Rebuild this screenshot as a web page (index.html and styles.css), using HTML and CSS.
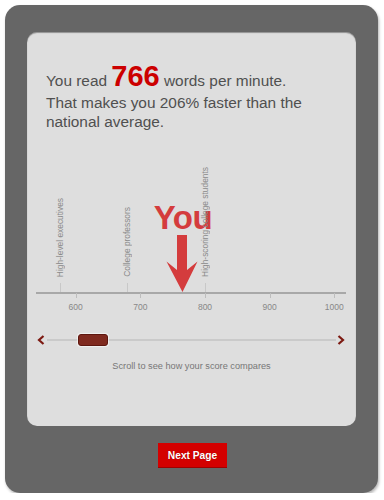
FILE: index.html
```html
<!DOCTYPE html>
<html>
<head>
<meta charset="utf-8">
<link rel="stylesheet" href="styles.css">
</head>
<body>
<div class="frame">
  <div class="card">
    <div class="result">
      <div class="line-one">You read <span class="wpm">766</span> words per minute.</div>
      <p class="compare">That makes you 206% faster than the national average.</p>
    </div>
    <div class="chart">
      <div class="marker" style="left:33px"></div>
      <div class="marker-label" style="left:28px">High-level executives</div>
      <div class="marker" style="left:100px"></div>
      <div class="marker-label" style="left:95px">College professors</div>
      <div class="you">You</div>
      <svg class="arrow" width="32" height="59" viewBox="0 0 32 59">
        <path d="M11 1 H21 V36 L31.5 27.5 L16.5 58 L0.5 27.5 L11 36 Z" fill="#d43c3d"/>
      </svg>
      <div class="marker" style="left:178px"></div>
      <div class="marker-label" style="left:173px">High-scoring college students</div>
      <div class="axis"></div>
      <div class="tick" style="left:48.7px"></div>
      <div class="tick" style="left:113.3px"></div>
      <div class="tick" style="left:178px"></div>
      <div class="tick" style="left:242.7px"></div>
      <div class="tick" style="left:307.3px"></div>
      <div class="tick-label" style="left:28.7px">600</div>
      <div class="tick-label" style="left:93.3px">700</div>
      <div class="tick-label" style="left:158px">800</div>
      <div class="tick-label" style="left:222.7px">900</div>
      <div class="tick-label" style="left:287.3px">1000</div>
    </div>
    <div class="slider">
      <svg class="chev" width="8" height="10" viewBox="0 0 8 10"><polyline points="6.5,1 2,5 6.5,9" fill="none" stroke="#7d1a12" stroke-width="2.2"/></svg>
      <div class="track"><div class="thumb"></div></div>
      <svg class="chev" width="8" height="10" viewBox="0 0 8 10"><polyline points="1.5,1 6,5 1.5,9" fill="none" stroke="#7d1a12" stroke-width="2.2"/></svg>
    </div>
    <p class="caption">Scroll to see how your score compares</p>
  </div>
  <div class="actions">
    <button class="next">Next Page</button>
  </div>
</div>
</body>
</html>
```

FILE: styles.css
```css
html, body {
  margin: 0;
  padding: 0;
  background: #ffffff;
}
body {
  padding: 5px 6px 0 5px;
  font-family: "Liberation Sans", Arial, sans-serif;
}
.frame {
  width: 373px;
  height: 488px;
  box-sizing: border-box;
  background: #666666;
  border-radius: 15px;
  padding: 27px 0 0 22px;
  box-shadow: 1px 2px 3px rgba(0, 0, 0, 0.3);
}
.card {
  width: 329px;
  height: 394px;
  background: #dedede;
  border-radius: 10px;
  box-shadow: inset 0 1px 1px rgba(0, 0, 0, 0.35);
  display: flex;
  flex-direction: column;
}
.result {
  box-sizing: border-box;
  height: 128px;
  padding: 32px 19px 0;
  color: #505050;
  font-size: 15.4px;
}
.line-one {
  line-height: 24px;
}
.wpm {
  color: #cc0000;
  font-weight: bold;
  font-size: 29px;
  line-height: 24px;
}
.compare {
  margin: 0;
  line-height: 19px;
}
.chart {
  position: relative;
  height: 160px;
}
.axis {
  position: absolute;
  left: 9px;
  top: 132px;
  width: 310px;
  height: 2px;
  background: #a8a8a8;
}
.tick {
  position: absolute;
  top: 133px;
  width: 1px;
  height: 5px;
  background: #bdbdbd;
}
.tick-label {
  position: absolute;
  top: 141px;
  width: 40px;
  text-align: center;
  font-size: 8.5px;
  line-height: 12px;
  color: #888888;
}
.marker {
  position: absolute;
  top: 123px;
  width: 1px;
  height: 10px;
  background: #c8c8c8;
}
.marker-label {
  position: absolute;
  bottom: 43px;
  width: 10px;
  line-height: 10px;
  font-size: 8.4px;
  color: #8a8a8a;
  writing-mode: vertical-rl;
  transform: rotate(180deg);
  white-space: nowrap;
}
.you {
  position: absolute;
  left: 116px;
  top: 41px;
  width: 80px;
  text-align: center;
  font-size: 33px;
  line-height: 33px;
  font-weight: bold;
  color: #d43c3d;
  letter-spacing: -0.5px;
}
.arrow {
  position: absolute;
  left: 139px;
  top: 74px;
}
.slider {
  margin-top: 14px;
  height: 12px;
  padding: 0 11px 0 10px;
  display: flex;
  align-items: center;
}
.chev {
  display: block;
  flex: none;
}
.slider .chev:first-child {
  margin-right: 2px;
}
.slider .chev:last-child {
  margin-left: 1px;
}
.track {
  position: relative;
  flex: 1;
  height: 12px;
}
.track::before {
  content: "";
  position: absolute;
  left: 0;
  right: 0;
  top: 5px;
  height: 2px;
  background: #cacaca;
}
.thumb {
  position: absolute;
  left: 31px;
  top: 0;
  width: 30px;
  height: 12px;
  box-sizing: border-box;
  background: #7f2a1f;
  border: 1px solid #5e170f;
  border-radius: 3px;
  box-shadow: 0 0 1px 1px rgba(255, 255, 255, 0.6);
}
.caption {
  margin: 14px 0 0;
  text-align: center;
  font-size: 9.2px;
  line-height: 12px;
  color: #777777;
}
.actions {
  display: flex;
  justify-content: center;
  padding-right: 22px;
  margin-top: 17px;
}
.next {
  width: 69px;
  height: 25px;
  margin-left: 2px;
  border: none;
  border-bottom: 1px solid #a00000;
  background: #d40000;
  color: #ffffff;
  font-family: "Liberation Sans", Arial, sans-serif;
  font-weight: bold;
  font-size: 10.2px;
  padding: 0;
  text-shadow: 0 0 1px rgba(0, 0, 0, 0.3);
}
```
